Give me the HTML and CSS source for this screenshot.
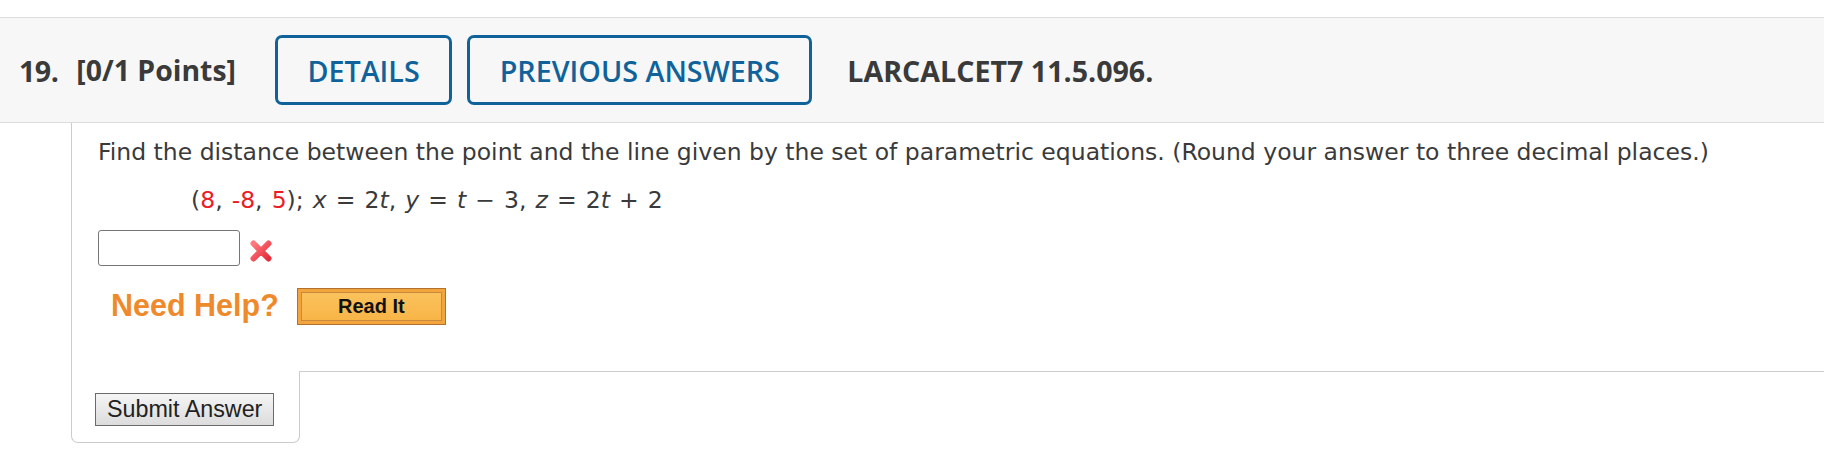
FILE: index.html
```html
<!DOCTYPE html>
<html>
<head>
<meta charset="utf-8">
<link rel="stylesheet" href="styles.css">
</head>
<body>
<div class="header">
  <span class="qnum">19.</span>
  <span class="points">[0/1 Points]</span>
  <button class="tab tab-details">DETAILS</button>
  <button class="tab tab-prev">PREVIOUS ANSWERS</button>
  <span class="code">LARCALCET7 11.5.096.</span>
</div>
<div class="card">
  <div class="question">
    <p class="prompt">Find the distance between the point and the line given by the set of parametric equations. (Round your answer to three decimal places.)</p>
    <p class="eq">(<span class="red">8</span>, <span class="red">-8</span>, <span class="red">5</span>); <i>x</i> = 2<i>t</i>, <i>y</i> = <i>t</i> − 3, <i>z</i> = 2<i>t</i> + 2</p>
    <div class="answer">
      <span class="input"></span>
      <svg class="xmark" width="24" height="24" viewBox="0 0 24 24">
        <defs>
          <linearGradient id="xg" x1="0" y1="0" x2="1" y2="1">
            <stop offset="0" stop-color="#ff7a7f"/>
            <stop offset="1" stop-color="#e42d3a"/>
          </linearGradient>
        </defs>
        <path d="M4.5 4.5 L19.5 19.5 M19.5 4.5 L4.5 19.5" stroke="url(#xg)" stroke-width="6" stroke-linecap="round"/>
      </svg>
    </div>
    <div class="help">
      <span class="needhelp">Need Help?</span>
      <span class="readit"><span class="readit-inner">Read It</span></span>
    </div>
  </div>
  <div class="footer">
    <div class="submitcell"><button class="submit">Submit Answer</button></div>
    <div class="rest"></div>
  </div>
</div>
</body>
</html>
```
FILE: styles.css
```css
html, body {
  margin: 0;
  padding: 0;
  background: #ffffff;
}
body {
  padding-top: 17px;
  font-family: "Open Sans", "DejaVu Sans", sans-serif;
}
.header {
  display: flex;
  align-items: center;
  height: 104px;
  background: #f7f7f7;
  border-top: 1px solid #dcdcdc;
  border-bottom: 1px solid #dcdcdc;
  padding-left: 19px;
  color: #3a3a3a;
}
.qnum {
  font-size: 28.6px;
  font-weight: 700;
  margin-right: 18px;
  letter-spacing: -0.5px;
}
.points {
  font-size: 28.4px;
  font-weight: 700;
  margin-right: 39px;
}
.tab {
  height: 70px;
  box-sizing: border-box;
  border: 3px solid #10639a;
  border-radius: 7px;
  background: transparent;
  color: #10639a;
  font-family: "Open Sans", sans-serif;
  font-size: 28.7px;
  font-weight: 600;
  padding: 0 29.5px;
  margin: 0 15px 0 0;
}
.tab-prev {
  margin-right: 35px;
}
.code {
  font-size: 28.6px;
  font-weight: 700;
}
.card {
  margin-left: 71px;
}
.question {
  border-left: 1px solid #cccccc;
  padding: 14px 0 46px 26px;
  color: #3a3a3a;
  font-family: "DejaVu Sans", Verdana, sans-serif;
  font-size: 23.5px;
}
.prompt {
  margin: 0;
  line-height: 30px;
}
.eq {
  margin: 18px 0 0 0;
  line-height: 30px;
  padding-left: 93px;
  word-spacing: 1.6px;
}
.red {
  color: #ec1c24;
}
.answer {
  display: flex;
  align-items: flex-start;
  margin-top: 15px;
}
.input {
  display: block;
  width: 142px;
  height: 36px;
  box-sizing: border-box;
  border: 1px solid #767676;
  border-radius: 3px;
  background: #fff;
}
.xmark {
  margin: 9px 0 0 9px;
}
.help {
  display: flex;
  align-items: flex-start;
  margin-top: 22px;
}
.needhelp {
  font-family: "Liberation Sans", Arial, sans-serif;
  font-weight: 700;
  font-size: 30.5px;
  line-height: 37px;
  margin: -1px 18px 0 13px;
  color: #ef8a2c;
}
.readit {
  display: block;
  width: 149px;
  height: 37px;
  box-sizing: border-box;
  border: 1px solid #b0722c;
  background: #f3a43c;
  padding: 3px;
}
.readit-inner {
  display: flex;
  align-items: center;
  justify-content: center;
  height: 100%;
  box-sizing: border-box;
  border: 1px solid #c88a3e;
  background: linear-gradient(#fbc25c, #f8b547);
  font-family: "Liberation Sans", Arial, sans-serif;
  font-weight: 700;
  font-size: 20px;
  color: #111;
}
.footer {
  display: flex;
}
.submitcell {
  width: 229px;
  box-sizing: border-box;
  border-left: 1px solid #cccccc;
  border-right: 1px solid #cccccc;
  border-bottom: 1px solid #cccccc;
  border-radius: 0 0 7px 7px;
  padding: 22px 0 16px 23px;
}
.rest {
  flex: 1;
  border-top: 1px solid #cccccc;
}
.submit {
  display: block;
  height: 33px;
  box-sizing: border-box;
  border: 1px solid #6b6b6b;
  border-radius: 0;
  background: linear-gradient(#f5f5f5, #dcdcdc);
  color: #222;
  font-family: "Liberation Sans", Arial, sans-serif;
  font-size: 23.3px;
  padding: 0 11px;
  margin: 0;
  line-height: 29px;
}
```
